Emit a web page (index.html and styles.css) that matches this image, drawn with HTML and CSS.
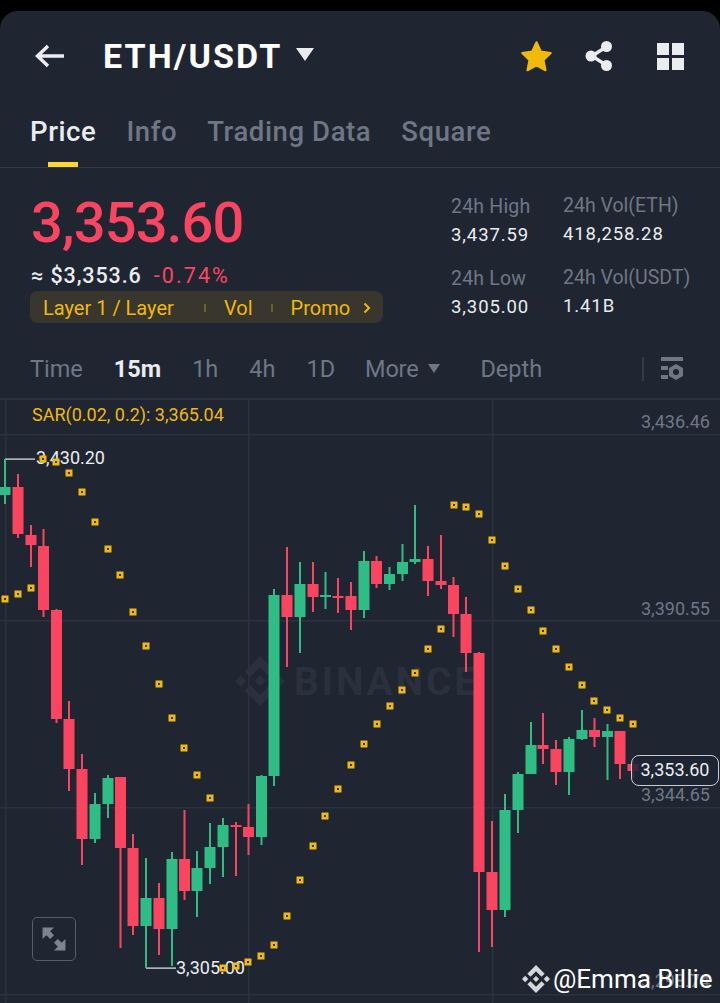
FILE: index.html
```html
<!DOCTYPE html>
<html lang="en">
<head>
  <meta charset="UTF-8" />
  <meta name="viewport" content="width=device-width, initial-scale=1" />
  <title>ETH/USDT</title>
  <link rel="stylesheet" href="styles.css">
</head>
<body>
  <div class="screen">

    <header class="top-bar">
      <svg class="back-icon" viewBox="0 0 30 24" width="30" height="24">
        <path d="M29 12H3M13 2 2.5 12 13 22" fill="none" stroke="#eaecef" stroke-width="3.4" />
      </svg>
      <h1 class="pair">ETH/USDT</h1>
      <span class="caret caret-title"></span>
      <div class="top-actions">
        <svg class="star-icon" viewBox="0 0 32 32" width="35" height="35">
          <polygon points="16,3 20,11.6 29,12.8 22.4,19.2 24.2,28.5 16,24 7.8,28.5 9.6,19.2 3,12.8 12,11.6" fill="#f0b90b" stroke="#f0b90b" stroke-width="2" stroke-linejoin="round" />
        </svg>
        <svg class="share-icon" viewBox="0 0 30 32" width="30" height="32">
          <path d="M22 7 8 16l14 9" fill="none" stroke="#eaecef" stroke-width="3.4" />
          <circle cx="22.5" cy="6.5" r="5.5" fill="#eaecef" />
          <circle cx="7" cy="16" r="5.5" fill="#eaecef" />
          <circle cx="22.5" cy="25.5" r="5.5" fill="#eaecef" />
        </svg>
        <div class="grid-icon"><i></i><i></i><i></i><i></i></div>
      </div>
    </header>

    <nav class="tabs">
      <a class="tab active">Price</a>
      <a class="tab">Info</a>
      <a class="tab">Trading Data</a>
      <a class="tab">Square</a>
    </nav>

    <section class="summary">
      <div class="price-block">
        <div class="last-price">3,353.60</div>
        <div class="price-sub"><span class="fiat">≈ $3,353.6</span><span class="change">-0.74%</span></div>
        <div class="tags">
          <span class="tag-first">Layer 1 / Layer</span>
          <span class="tag-sep"></span>
          <span>Vol</span>
          <span class="tag-sep tag-sep-short"></span>
          <span>Promo</span>
          <svg class="tag-arrow" viewBox="0 0 8 12" width="8" height="12"><path d="M1.5 1.5 6 6l-4.500 4.500" fill="none" stroke="#f0b90b" stroke-width="2" /></svg>
        </div>
      </div>
      <div class="stats">
        <div class="stat-col stat-low">
          <div class="stat"><span class="stat-label">24h High</span><span class="stat-value">3,437.59</span></div>
          <div class="stat"><span class="stat-label">24h Low</span><span class="stat-value">3,305.00</span></div>
        </div>
        <div class="stat-col">
          <div class="stat"><span class="stat-label">24h Vol(ETH)</span><span class="stat-value">418,258.28</span></div>
          <div class="stat"><span class="stat-label">24h Vol(USDT)</span><span class="stat-value">1.41B</span></div>
        </div>
      </div>
    </section>

    <div class="intervals">
      <span>Time</span>
      <span class="current">15m</span>
      <span>1h</span>
      <span>4h</span>
      <span>1D</span>
      <span class="more">More<span class="caret caret-more"></span></span>
      <span class="depth">Depth</span>
      <span class="interval-sep"></span>
      <svg class="settings-icon" viewBox="0 0 24 24" width="24" height="24">
        <path d="M1 0h22v4H1zM1 9h7v4H1zM1 18h7v4H1z" fill="#6f7785" />
        <path d="M16 7l7 4v8l-7 4-7-4v-8z" fill="#6f7785" />
        <circle cx="16" cy="15" r="3" fill="#1f2632" />
      </svg>
    </div>

    <section class="chart" id="chart">
      <div class="wm-logo">
        <svg viewBox="0 0 24 24" width="50" height="50">
          <path d="M7.300 10.100 12 5.400l4.700 4.700 2.700-2.700L12 0 4.600 7.400zM16.700 13.900 12 18.600l-4.700-4.700-2.700 2.700L12 24l7.400-7.400zM0 12l2.700-2.700L5.400 12l-2.700 2.700zM18.600 12l2.700-2.700L24 12l-2.700 2.700zM12 9.400l2.600 2.600-2.600 2.600L9.400 12z" fill="#2a303c" />
        </svg>
      </div>
      <div class="wm-text">BINANCE</div>
      <div class="sar-label">SAR(0.02, 0.2): 3,365.04</div>
      <span class="axis-label axis-1">3,436.46</span>
      <span class="axis-label axis-2">3,390.55</span>
      <span class="axis-label axis-3">3,344.65</span>
      <span class="axis-label axis-4">3,298.74</span>
      <span class="extreme extreme-high">3,430.20</span>
      <span class="extreme extreme-low">3,305.00</span>
      <svg class="plot" id="plot" width="720" height="603" viewBox="0 400 720 603"></svg>
      <span class="last-tag">3,353.60</span>
      <div class="expand-btn">
        <svg viewBox="0 0 44 44" width="42" height="42">
          <path d="M10 10h12l-4 4 4 4-4 4-4-4-4 4zM34 34H22l4-4-4-4 4-4 4 4 4-4z" fill="#7b8490" />
        </svg>
      </div>
      <div class="credit">
        <svg viewBox="0 0 24 24" width="28" height="28">
          <path d="M7.300 10.100 12 5.400l4.700 4.700 2.700-2.700L12 0 4.600 7.400zM16.700 13.900 12 18.600l-4.700-4.700-2.700 2.700L12 24l7.400-7.400zM0 12l2.700-2.700L5.400 12l-2.700 2.700zM18.600 12l2.700-2.700L24 12l-2.700 2.700zM12 9.400l2.600 2.600-2.600 2.600L9.400 12z" fill="#d5d7da" />
        </svg>
        <span>@Emma Billie</span>
      </div>
    </section>

  </div>
  <script src="chart.js"></script>
</body>
</html>
```

FILE: styles.css
```css
* {
  box-sizing: border-box;
}

html, body {
  height: 100%;
}

body {
  margin: 0;
  background: #000;
  font-family: Roboto, "Noto Sans", sans-serif;
  color: #eaecef;
  overflow: hidden;
}

.screen {
  height: 992px;
  margin-top: 11px;
  background: #1f2632;
  border-radius: 18px 18px 0 0;
  overflow: hidden;
}

.top-bar {
  display: flex;
  align-items: center;
  height: 90px;
  padding: 0 36px 0 35px;
}

.back-icon {
  margin-right: 38px;
}

.pair {
  margin: 0;
  font-size: 34px;
  font-weight: 700;
  letter-spacing: 2.1px;
  color: #fff;
}

.caret {
  display: inline-block;
  width: 0;
  height: 0;
  border-style: solid;
  border-color: #eaecef transparent transparent;
}

.caret-title {
  margin: -3px 0 0 14px;
  border-width: 13px 9px 0;
}

.top-actions {
  display: flex;
  align-items: center;
  margin-left: auto;
}

.star-icon {
  margin-right: 30px;
}

.share-icon {
  margin-right: 43px;
}

.grid-icon {
  display: grid;
  grid-template-columns: 12px 12px;
  grid-auto-rows: 12px;
  gap: 3px;
}

.grid-icon i {
  background: #eaecef;
}

.tabs {
  display: flex;
  gap: 30px;
  height: 67px;
  padding-left: 30px;
  border-bottom: 1px solid #333a45;
}

.tab {
  position: relative;
  font-size: 27.500px;
  line-height: 61px;
  font-weight: 500;
  letter-spacing: 0.6px;
  color: #6f7785;
}

.tab.active {
  color: #eaecef;
}

.tab.active::after {
  content: "";
  position: absolute;
  left: 18px;
  bottom: 0;
  width: 30px;
  height: 5px;
  background: #fcd535;
}

.summary {
  display: flex;
  justify-content: space-between;
  height: 169px;
  padding: 27px 0 0 30px;
}

.last-price {
  margin-left: 1px;
  font-size: 56px;
  line-height: 56px;
  font-weight: 500;
  letter-spacing: -0.8px;
  color: #fb4560;
}

.price-sub {
  display: flex;
  gap: 12px;
  margin: 12px 0 0 1px;
  font-size: 21.500px;
  line-height: 26px;
  font-weight: 500;
  letter-spacing: 0.9px;
}

.change {
  color: #fb4560;
  font-weight: 400;
  letter-spacing: 2.100px;
}

.tags {
  display: flex;
  align-items: center;
  width: 353px;
  height: 32px;
  margin-top: 2px;
  padding: 2px 12px 0 13px;
  background: #38362d;
  border-radius: 8px;
  font-size: 20px;
  color: #f0b90b;
}

.tag-first {
  width: 131px;
}

.tag-sep {
  width: 2px;
  height: 8px;
  margin: 0 18px 0 30px;
  background: #6b6231;
}

.tag-sep-short {
  margin-left: 18px;
}

.tag-arrow {
  margin-left: auto;
}

.stats {
  display: flex;
  margin-top: -3px;
  padding-right: 30px;
}

.stat-col {
  display: flex;
  flex-direction: column;
  gap: 16px;
  width: 112px;
}

.stat-col:last-child {
  width: 127px;
}

.stat-low {
  padding-top: 1px;
}

.stat {
  display: flex;
  flex-direction: column;
  white-space: nowrap;
}

.stat-label {
  font-size: 19.500px;
  line-height: 28px;
  letter-spacing: 0.2px;
  color: #6f7785;
}

.stat-col:last-child .stat-label {
  letter-spacing: 0;
}

.stat-value {
  font-size: 18.500px;
  line-height: 28px;
  letter-spacing: 0.9px;
  color: #eaecef;
}

.intervals {
  display: flex;
  align-items: center;
  gap: 31px;
  height: 63px;
  padding: 3px 0 0 30px;
  font-size: 23.500px;
  color: #6f7785;
  border-bottom: 2px solid #2b313c;
}

.intervals .current {
  font-weight: 700;
  color: #eaecef;
}

.more {
  margin-left: -1px;
  letter-spacing: -0.2px;
}

.caret-more {
  margin: 0 0 4px 10px;
  border-width: 9px 6.500px 0;
  border-top-color: #6f7785;
}

.depth {
  margin-left: 9px;
}

.interval-sep {
  width: 2px;
  height: 24px;
  margin-left: 69px;
  background: #343b47;
}

.settings-icon {
  margin-left: -15px;
}

/* chart: everything in here sits on a free canvas */
.chart {
  position: relative;
  height: 603px;
}

.plot {
  position: absolute;
  left: 0;
  top: 0;
}

.wm-logo {
  position: absolute;
  left: 235px;
  top: 256px;
  line-height: 0;
}

.wm-text {
  position: absolute;
  left: 294px;
  top: 259px;
  font-size: 39px;
  line-height: 46px;
  font-weight: 700;
  letter-spacing: 2.800px;
  color: #2a303c;
}

.sar-label {
  position: absolute;
  left: 32px;
  top: 5px;
  font-size: 18px;
  line-height: 20px;
  color: #f0b90b;
}

.axis-label {
  position: absolute;
  right: 10px;
  font-size: 18px;
  line-height: 20px;
  color: #6f7785;
}

.axis-1 { top: 12px; }
.axis-2 { top: 199px; }
.axis-3 { top: 385px; }
.axis-4 { top: 571px; }

.extreme {
  position: absolute;
  font-size: 18px;
  line-height: 20px;
  color: #eaecef;
}

.extreme-high {
  left: 36px;
  top: 48px;
}

.extreme-low {
  left: 176px;
  top: 558px;
}

.last-tag {
  position: absolute;
  left: 631px;
  top: 355px;
  width: 88px;
  height: 31px;
  border: 1.500px solid #c9ccd1;
  border-radius: 8px;
  background: rgba(31, 38, 50, 0.85);
  font-size: 18px;
  line-height: 28px;
  text-align: center;
  color: #eaecef;
}

.expand-btn {
  position: absolute;
  left: 32px;
  top: 517px;
  width: 44px;
  height: 44px;
  border: 1.500px solid #565e6b;
  border-radius: 5px;
}

.credit {
  position: absolute;
  left: 522px;
  top: 564px;
  display: flex;
  align-items: center;
  gap: 3px;
  font-size: 26px;
  line-height: 30px;
  color: #fff;
}
```

FILE: chart.js
```js
// candles: [centre x, colour, wick top, wick bottom, body top, body bottom] in page pixels
const candles = [
  [5, 'g', 459, 504, 487, 495], [18, 'r', 474, 538, 487, 534], [31, 'r', 525, 567, 535, 545],
  [43.5, 'r', 529, 617, 546, 610], [56.5, 'r', 609, 723, 610, 719], [69, 'r', 701, 791, 719, 769],
  [82, 'r', 754, 865, 769, 839], [95, 'g', 793, 843, 804, 839], [108, 'g', 775, 818, 778, 804],
  [120.5, 'r', 777, 948, 777, 848], [133, 'r', 834, 935, 848, 926], [146, 'g', 858, 968, 898, 926],
  [159, 'r', 883, 955, 898, 929], [172, 'g', 852, 966, 859, 929], [184.5, 'r', 810, 900, 859, 891],
  [197, 'g', 851, 917, 868, 891], [210, 'g', 823, 884, 847, 868], [223, 'g', 818, 877, 825, 847],
  [236, 'r', 822, 876, 825, 827], [248.5, 'r', 804, 855, 827, 837], [261.5, 'g', 775, 845, 776, 837],
  [274, 'g', 589, 786, 595, 776], [287, 'r', 547, 667, 595, 617], [300, 'g', 562, 653, 584, 617],
  [313, 'r', 562, 612, 584, 597], [325.5, 'g', 572, 609, 595, 597], [338, 'r', 578, 613, 596, 598],
  [351, 'r', 582, 630, 596, 610], [364, 'g', 551, 618, 561, 610], [376.5, 'r', 556, 588, 561, 584],
  [389.5, 'g', 567, 590, 574, 584], [402.5, 'g', 544, 581, 562, 574], [415, 'g', 505, 564, 559, 562],
  [428, 'r', 546, 596, 559, 581], [441, 'r', 535, 589, 581, 585], [453.5, 'r', 577, 637, 585, 614],
  [466, 'r', 597, 672, 614, 653], [479, 'r', 652, 952, 653, 872], [492, 'r', 821, 947, 872, 910],
  [505, 'g', 794, 917, 810, 910], [518, 'g', 772, 833, 774, 810], [531, 'g', 722, 774, 745, 774],
  [543, 'r', 713, 764, 745, 749], [556, 'r', 740, 785, 749, 772], [569, 'g', 737, 795, 739, 772],
  [582, 'g', 710, 740, 730, 739], [594.5, 'r', 718, 747, 730, 737], [607.5, 'g', 724, 780, 731, 737],
  [620, 'r', 731, 779, 731, 764], [633, 'r', 760, 778, 764, 771]
];

const sar = [
  [5, 599], [18, 594], [31, 588], [43, 459], [56, 462], [69, 473], [82, 492], [95, 522], [108, 549],
  [120, 575], [133, 612], [146, 646], [159, 684], [172, 718], [184, 748], [197, 775], [210, 798],
  [223, 968], [236, 966], [248, 962], [261, 956], [274, 945], [287, 916], [300, 880], [313, 846],
  [325, 816], [338, 789], [351, 765], [364, 744], [377, 724], [390, 706], [402, 690], [415, 673],
  [428, 649], [441, 629], [454, 505], [466, 507], [479, 514], [492, 540], [505, 566], [518, 589],
  [531, 610], [543, 631], [556, 649], [569, 667], [582, 685], [594, 701], [607, 710], [620, 718], [633, 724]
];

const colors = { r: '#fb4560', g: '#2ebd85' };
const gridColor = '#2c323d';
const parts = [];

function rect(x, y, w, h, fill) {
  parts.push(`<rect x="${x}" y="${y}" width="${w}" height="${h}" fill="${fill}"/>`);
}

[434, 620, 807, 994].forEach(y => rect(0, y, 720, 1.5, gridColor));
[5, 248, 492].forEach(x => rect(x, 400, 1.5, 603, gridColor));

// leader lines of the high and low labels
rect(5, 458.500, 30, 1.200, '#eaecef');
rect(146, 967.500, 30, 1.200, '#eaecef');

candles.forEach(([x, c, wt, wb, bt, bb]) => {
  rect(x - 1, wt, 2, wb - wt, colors[c]);
  rect(x - 5.5, bt, 11, bb - bt, colors[c]);
});

sar.forEach(([x, y]) => {
  rect(x - 3.5, y - 3.5, 7, 7, '#f0b90b');
  rect(x - 1, y - 1, 2, 2, '#3a3416');
});

document.getElementById('plot').innerHTML = parts.join('');
```
